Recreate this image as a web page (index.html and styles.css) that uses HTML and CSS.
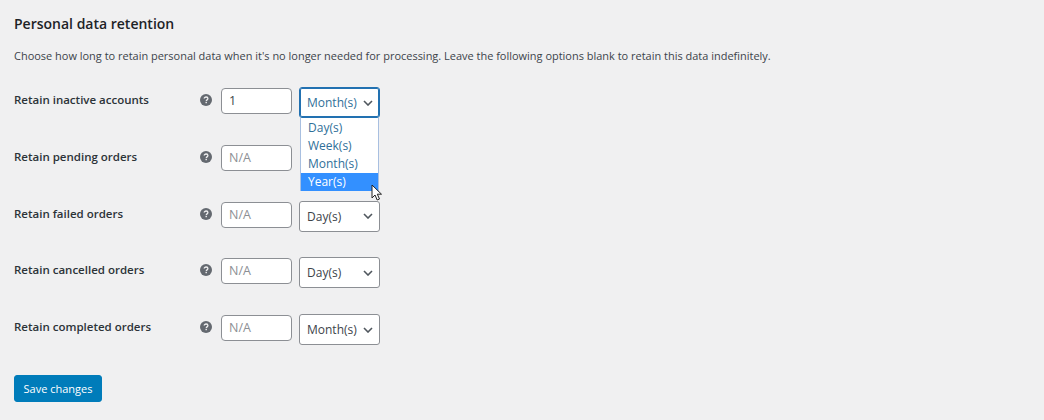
FILE: index.html
```html
<!DOCTYPE html>
<html lang="en">
<head>
<meta charset="utf-8">
<title>Personal data retention</title>
<link rel="stylesheet" href="styles.css">
</head>
<body>
<main class="page">
  <h2 class="title">Personal data retention</h2>
  <p class="desc">Choose how long to retain personal data when it's no longer needed for processing. Leave the following options blank to retain this data indefinitely.</p>
  <div class="rows">
    <div class="row">
      <label class="label">Retain inactive accounts</label>
      <svg class="help" viewBox="0 0 12 12"><circle cx="6" cy="6" r="6" fill="#646970"/><path d="M4.2 4.6c0-1 .8-1.6 1.9-1.6s1.8.6 1.8 1.5c0 1.4-1.6 1.3-1.6 2.5" fill="none" stroke="#f0f0f1" stroke-width="1.3"/><rect x="5.5" y="7.8" width="1.4" height="1.4" fill="#f0f0f1"/></svg>
      <div class="input">1</div>
      <div class="select-wrap">
        <div class="select focus"><span>Month(s)</span><svg class="chev" viewBox="0 0 10 6"><path d="M1 1l4 4 4-4" fill="none" stroke="#50575e" stroke-width="1.6"/></svg></div>
        <ul class="menu">
          <li>Day(s)</li>
          <li>Week(s)</li>
          <li>Month(s)</li>
          <li class="active">Year(s)</li>
        </ul>
        <svg class="cursor" viewBox="0 0 13 18"><path d="M1 1v13l3-3 2.2 5 2.3-1-2.2-4.8H10.500z" fill="#fff" stroke="#222" stroke-width="1"/></svg>
      </div>
    </div>
    <div class="row">
      <label class="label">Retain pending orders</label>
      <svg class="help" viewBox="0 0 12 12"><circle cx="6" cy="6" r="6" fill="#646970"/><path d="M4.2 4.6c0-1 .8-1.6 1.9-1.6s1.8.6 1.8 1.5c0 1.4-1.6 1.3-1.6 2.5" fill="none" stroke="#f0f0f1" stroke-width="1.3"/><rect x="5.5" y="7.8" width="1.4" height="1.4" fill="#f0f0f1"/></svg>
      <div class="input empty">N/A</div>
      <div class="select-wrap"></div>
    </div>
    <div class="row">
      <label class="label">Retain failed orders</label>
      <svg class="help" viewBox="0 0 12 12"><circle cx="6" cy="6" r="6" fill="#646970"/><path d="M4.2 4.6c0-1 .8-1.6 1.9-1.6s1.8.6 1.8 1.5c0 1.4-1.6 1.3-1.6 2.5" fill="none" stroke="#f0f0f1" stroke-width="1.3"/><rect x="5.5" y="7.8" width="1.4" height="1.4" fill="#f0f0f1"/></svg>
      <div class="input empty">N/A</div>
      <div class="select-wrap"><div class="select"><span>Day(s)</span><svg class="chev" viewBox="0 0 10 6"><path d="M1 1l4 4 4-4" fill="none" stroke="#50575e" stroke-width="1.6"/></svg></div></div>
    </div>
    <div class="row">
      <label class="label">Retain cancelled orders</label>
      <svg class="help" viewBox="0 0 12 12"><circle cx="6" cy="6" r="6" fill="#646970"/><path d="M4.2 4.6c0-1 .8-1.6 1.9-1.6s1.8.6 1.8 1.5c0 1.4-1.6 1.3-1.6 2.5" fill="none" stroke="#f0f0f1" stroke-width="1.3"/><rect x="5.5" y="7.8" width="1.4" height="1.4" fill="#f0f0f1"/></svg>
      <div class="input empty">N/A</div>
      <div class="select-wrap"><div class="select"><span>Day(s)</span><svg class="chev" viewBox="0 0 10 6"><path d="M1 1l4 4 4-4" fill="none" stroke="#50575e" stroke-width="1.6"/></svg></div></div>
    </div>
    <div class="row">
      <label class="label">Retain completed orders</label>
      <svg class="help" viewBox="0 0 12 12"><circle cx="6" cy="6" r="6" fill="#646970"/><path d="M4.2 4.6c0-1 .8-1.6 1.9-1.6s1.8.6 1.8 1.5c0 1.4-1.6 1.3-1.6 2.5" fill="none" stroke="#f0f0f1" stroke-width="1.3"/><rect x="5.5" y="7.8" width="1.4" height="1.4" fill="#f0f0f1"/></svg>
      <div class="input empty">N/A</div>
      <div class="select-wrap"><div class="select"><span>Month(s)</span><svg class="chev" viewBox="0 0 10 6"><path d="M1 1l4 4 4-4" fill="none" stroke="#50575e" stroke-width="1.6"/></svg></div></div>
    </div>
  </div>
  <button class="save">Save changes</button>
</main>
</body>
</html>
```
FILE: styles.css
```css
* { box-sizing: border-box; }
html, body { margin: 0; height: 100%; }
body { background: #f0f0f1; color: #3c434a; font-family: "Open Sans", "Noto Sans", sans-serif; font-size: 12px; overflow: hidden; }
.page { padding: 14px 0 0 14px; }
.title { margin: 0; font-size: 14px; line-height: 19px; font-weight: 600; color: #1d2327; }
.desc { margin: 14px 0 0; font-size: 10.97px; line-height: 18px; white-space: nowrap; }
.rows { margin-top: 22px; display: flex; flex-direction: column; gap: 25.75px; }
.row { display: flex; align-items: flex-start; height: 31px; position: relative; }
.label { width: 186px; padding-top: 5px; font-weight: 600; font-size: 11.5px; line-height: 16px; color: #2c3338; }
.help { width: 12px; height: 12px; margin-top: 7px; flex: none; }
.input { width: 71px; height: 26px; margin-left: 9px; margin-top: 1px; padding: 0 7px; background: #fff; border: 1px solid #8c8f94; border-radius: 4px; font-size: 12.5px; line-height: 24px; color: #3c434a; }
.input.empty { color: #8c8f94; }
.select-wrap { position: relative; margin-left: 7px; width: 80.5px; }
.select { display: flex; align-items: center; justify-content: space-between; height: 31px; padding: 0 6px 0 7px; background: #fff; border: 1px solid #8c8f94; border-radius: 3px; font-size: 12px; color: #3c434a; }
.select.focus { border-color: #2271b1; box-shadow: 0 0 0 1px #2271b1 inset; color: #2f6f99; }
.chev { width: 10px; height: 6px; flex: none; }
.menu { position: absolute; left: 1px; top: 31px; width: 79px; height: 73px; margin: 0; padding: 1px 0 0; list-style: none; background: #fff; border: 1px solid #a8bfe0; border-top: 0; font-size: 12px; line-height: 18px; color: #2f6f99; z-index: 2; }
.menu li { padding-left: 7px; }
.menu .active { background: #3390ff; color: #fff; }
.cursor { position: absolute; left: 72px; top: 97px; width: 13px; height: 18px; z-index: 3; }
.save { display: block; margin-top: 30px; width: 88px; height: 27px; padding: 0; background: #007cba; color: #fff; border: 1px solid #007cba; border-radius: 3px; font-family: inherit; font-size: 11px; }
```
